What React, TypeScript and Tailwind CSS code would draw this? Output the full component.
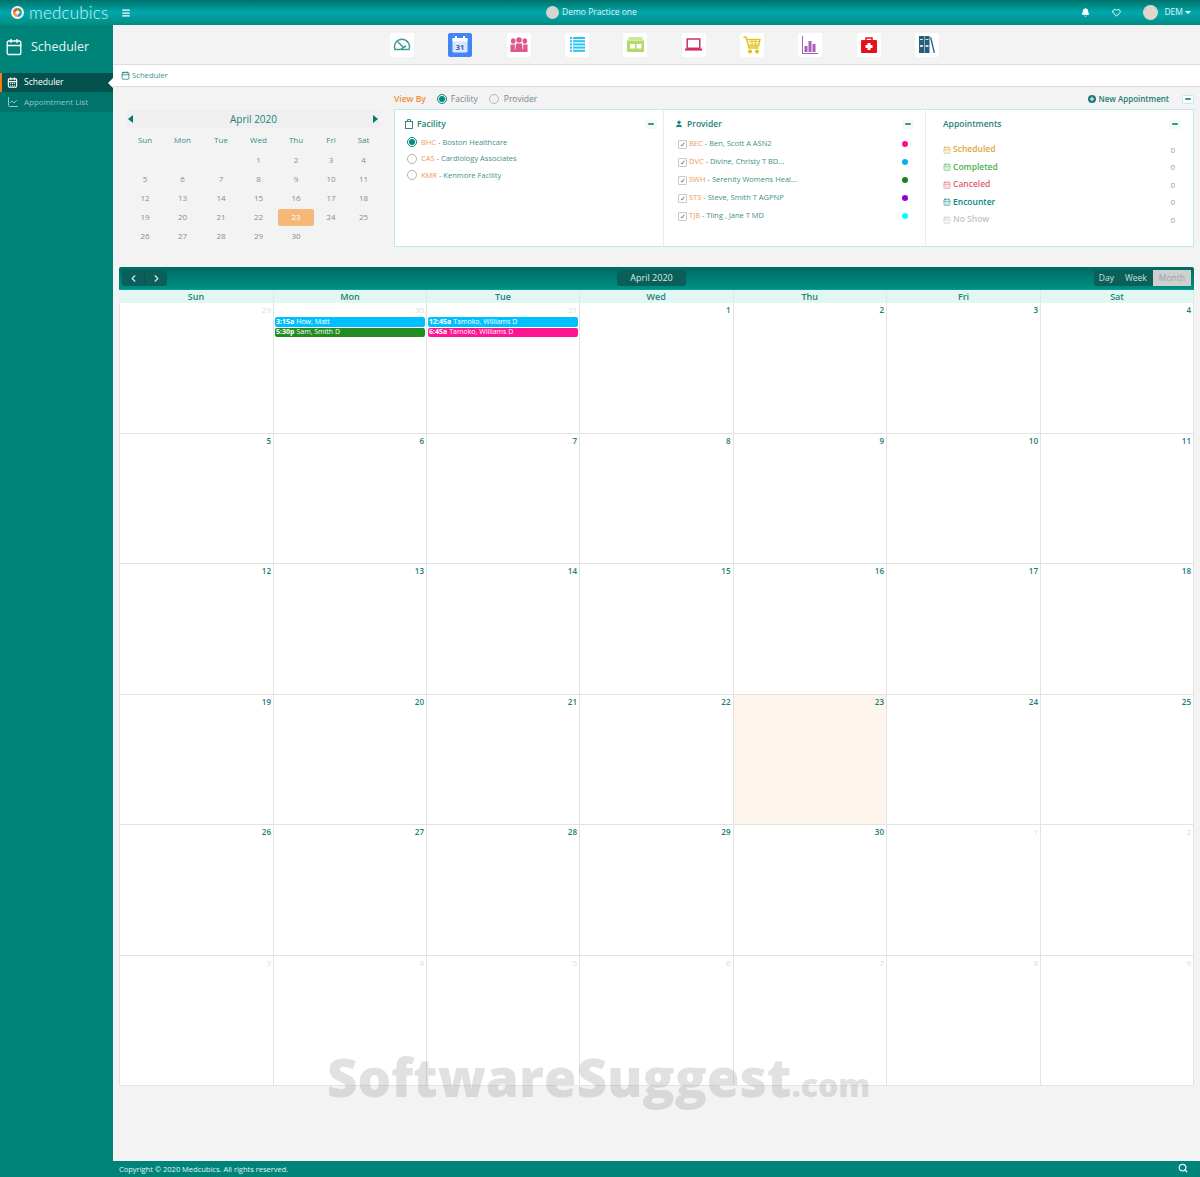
import { Bell, Calendar, CalendarDays, ChevronLeft, ChevronRight, Heart, LineChart, Menu, Minus, Plus, Search, User } from 'lucide-react';

const weekDays = ['Sun', 'Mon', 'Tue', 'Wed', 'Thu', 'Fri', 'Sat'];

const facilities = [
  { code: 'BHC', name: 'Boston Healthcare', active: true },
  { code: 'CAS', name: 'Cardiology Associates', active: false },
  { code: 'KMR', name: 'Kenmore Facility', active: false },
];

const providers = [
  { code: 'BEC', name: 'Ben, Scott A ASN2', dot: 'bg-[#ff0a8c]' },
  { code: 'DVC', name: 'Divine, Christy T BD...', dot: 'bg-[#00b4f0]' },
  { code: 'SWH', name: 'Serenity Womens Heal...', dot: 'bg-[#1b801b]' },
  { code: 'STS', name: 'Steve, Smith T AGPNP', dot: 'bg-[#9400d3]' },
  { code: 'TJB', name: 'Tling , Jane T MD', dot: 'bg-[#0ff]' },
];

const statuses = [
  { label: 'Scheduled', color: 'text-[#d9a93c]' },
  { label: 'Completed', color: 'text-[#4caf50]' },
  { label: 'Canceled', color: 'text-[#e0606e]' },
  { label: 'Encounter', color: 'text-[#00897f]' },
  { label: 'No Show', color: 'text-[#c4c4c4]' },
];

const miniWeeks = [
  ['', '', '', '1', '2', '3', '4'],
  ['5', '6', '7', '8', '9', '10', '11'],
  ['12', '13', '14', '15', '16', '17', '18'],
  ['19', '20', '21', '22', '23', '24', '25'],
  ['26', '27', '28', '29', '30', '', ''],
];

const monthWeeks = [
  ['29', '30', '31', '1', '2', '3', '4'],
  ['5', '6', '7', '8', '9', '10', '11'],
  ['12', '13', '14', '15', '16', '17', '18'],
  ['19', '20', '21', '22', '23', '24', '25'],
  ['26', '27', '28', '29', '30', '1', '2'],
  ['3', '4', '5', '6', '7', '8', '9'],
];

const events: Record<string, { time: string; name: string; color: string }[]> = {
  '0-1': [
    { time: '3:15a', name: 'How, Matt', color: 'bg-[#00bfff]' },
    { time: '5:30p', name: 'Sam, Smith D', color: 'bg-[#228b22]' },
  ],
  '0-2': [
    { time: '12:45a', name: 'Tamoko, Williams D', color: 'bg-[#00bfff]' },
    { time: '6:45a', name: 'Tamoko, Williams D', color: 'bg-[#ff1493]' },
  ],
};

function isMuted(week: number, day: string) {
  const n = Number(day);
  return (week === 0 && n > 20) || (week === 4 && n < 10) || week === 5;
}

function Tile({ children }: { children: React.ReactNode }) {
  return <div className="flex h-[24px] w-[24px] items-center justify-center rounded-[2px] bg-white">{children}</div>;
}

function ToolbarIcons() {
  return (
    <div className="flex h-[40px] items-center justify-center gap-[34.300px] border-b border-[#dedede] pl-[16px]">
      <Tile>
        <svg width="18" height="15" viewBox="0 0 18 15" fill="none" stroke="#3d9c98" strokeWidth="1.5">
          <path d="M2 12.5 A7.5 7.5 0 1 1 16 12.5 Z" />
          <path d="M5 5l6 6M8 12l5-3" />
        </svg>
      </Tile>
      <div className="flex h-[24px] w-[24px] flex-col items-center justify-center rounded-[2px] bg-[#4285f4]">
        <svg width="16" height="17" viewBox="0 0 16 17">
          <rect x="0.5" y="2" width="15" height="14.5" rx="1" fill="#dbe7fb" />
          <rect x="0.5" y="2" width="15" height="3.5" fill="#fff" />
          <rect x="3" y="0" width="2" height="3.5" fill="#fff" />
          <rect x="11" y="0" width="2" height="3.5" fill="#fff" />
          <text x="8" y="14" textAnchor="middle" fontSize="7.5" fontWeight="700" fill="#2a5db8" fontFamily="Open Sans, sans-serif">31</text>
        </svg>
      </div>
      <Tile>
        <svg width="18" height="15" viewBox="0 0 18 15" fill="#e0578c">
          <circle cx="9" cy="3" r="2.8" />
          <ellipse cx="3.2" cy="4" rx="2.3" ry="2.800" />
          <ellipse cx="14.800" cy="4" rx="2.3" ry="2.800" />
          <path d="M6 6.500h6l.6 6.500H5.400z" />
          <path d="M.5 7.500h4.300v5.500H.5zM13.200 7.500h4.300v5.500h-4.300z" />
          <path d="M.5 12.500h17V15H.5z" />
        </svg>
      </Tile>
      <Tile>
        <svg width="15" height="15" viewBox="0 0 15 15" fill="#2bc4f2">
          {[0, 3.2, 6.4, 9.6, 12.8].map((y) => (
            <g key={y}>
              <rect x="0" y={y} width="2" height="2" />
              <rect x="3" y={y} width="12" height="2" />
            </g>
          ))}
        </svg>
      </Tile>
      <Tile>
        <svg width="17" height="15" viewBox="0 0 17 15">
          <path d="M0 3.5h17V15H0z" fill="#b5d96a" />
          <path d="M2 0h13l1 3.5H1z" fill="#cde596" />
          <rect x="3" y="7" width="5" height="4.5" fill="#fff" />
          <rect x="9.5" y="7" width="5" height="4.5" fill="#fff" />
        </svg>
      </Tile>
      <Tile>
        <svg width="17" height="13" viewBox="0 0 17 13" fill="none" stroke="#d1305f" strokeWidth="1.5">
          <rect x="2.2" y="1" width="12.6" height="9.3" />
          <path d="M0 11.6h17" strokeWidth="2" />
        </svg>
      </Tile>
      <Tile>
        <svg width="18" height="18" viewBox="0 0 18 18" fill="none" stroke="#e3c21e" strokeWidth="1.4">
          <path d="M0.5 1H3l3 11h9.5" />
          <path d="M4 3.5h13l-1.5 6.5H6" />
          <path d="M6 5.5h10M6.5 8h9M9 3.5V10M12.5 3.5V10" strokeWidth="0.9" />
          <circle cx="7" cy="15.5" r="1.4" fill="#e3c21e" />
          <circle cx="14" cy="15.5" r="1.4" fill="#e3c21e" />
        </svg>
      </Tile>
      <Tile>
        <svg width="16" height="18" viewBox="0 0 16 18" fill="#a55fb8">
          <rect x="0" y="0" width="1" height="18" />
          <rect x="0" y="17" width="16" height="1" />
          <rect x="2.5" y="10" width="3" height="6" />
          <rect x="6.5" y="5" width="3" height="11" />
          <rect x="10.5" y="8" width="3" height="8" />
        </svg>
      </Tile>
      <Tile>
        <svg width="16" height="16" viewBox="0 0 16 16">
          <path d="M5 3V1h6v2" fill="none" stroke="#e8101a" strokeWidth="1.5" />
          <rect x="0" y="3" width="16" height="13" rx="1" fill="#e8101a" />
          <path d="M6.5 6h3v2h2v3h-2v2h-3v-2h-2V8h2z" fill="#fff" />
        </svg>
      </Tile>
      <Tile>
        <svg width="16" height="17" viewBox="0 0 16 17" fill="#25607a">
          <path d="M0 0h5v17H0zM5.500 0h5v17h-5z" />
          <path d="M1 3h3v1H1zM1 9h3v2H1zM6.500 3h3v1h-3zM6.500 9h3v2h-3z" fill="#cfe3ea" />
          <path d="M11 1.500l1.200-.4L16 16.500l-1.300.5z" />
        </svg>
      </Tile>
    </div>
  );
}

function CollapseButton() {
  return (
    <span className="flex h-[9px] w-[12px] items-center justify-center rounded-[2px] bg-[#f3f9f8]">
      <Minus size={8} strokeWidth={4} className="text-[#00746c]" />
    </span>
  );
}

function MiniCalendar() {
  return (
    <div className="w-[253px] text-center">
      <div className="flex h-[18px] items-center justify-between bg-[#efefef] px-[1px]">
        <span className="h-0 w-0 border-y-[4px] border-r-[5px] border-y-transparent border-r-[#00796f]" />
        <span className="pl-[1px] text-[10px] leading-none text-[#23807a]">April 2020</span>
        <span className="mr-[1px] h-0 w-0 border-y-[4px] border-l-[5px] border-y-transparent border-l-[#00796f]" />
      </div>
      <div className="mt-[5px] grid h-[13px] grid-cols-[36px_39px_38px_37px_38px_32px_33px] items-center text-[8px] text-[#3b8d88]">
        {weekDays.map((d) => (
          <span key={d}>{d}</span>
        ))}
      </div>
      <div className="mt-[4px]">
        {miniWeeks.map((week, w) => (
          <div key={w} className="grid h-[19.200px] grid-cols-[36px_39px_38px_37px_38px_32px_33px] items-center text-[8px] text-[#8b8b8b]">
            {week.map((d, i) =>
              d === '23' ? (
                <span key={i} className="mx-[1px] flex h-[17px] items-center justify-center rounded-[2px] bg-[#f7b777] text-white">
                  {d}
                </span>
              ) : (
                <span key={i}>{d}</span>
              )
            )}
          </div>
        ))}
      </div>
    </div>
  );
}

function FilterPanel() {
  return (
    <div className="flex flex-1 flex-col">
      <div className="flex h-[22px] items-center pt-[2px] text-[8.500px]">
        <span className="font-semibold text-[#ee8f3a]">View By</span>
        <span className="ml-[11px] flex h-[10px] w-[10px] items-center justify-center rounded-full border border-[#00897f]">
          <span className="h-[6px] w-[6px] rounded-full bg-[#00897f]" />
        </span>
        <span className="ml-[4px] text-[#74888a]">Facility</span>
        <span className="ml-[11px] h-[10px] w-[10px] rounded-full border border-[#b5b5b5]" />
        <span className="ml-[5px] text-[#74888a]">Provider</span>
        <span className="ml-auto flex items-center gap-[2px] text-[8px] font-semibold text-[#1a7d77]">
          <span className="flex h-[8px] w-[8px] items-center justify-center rounded-full bg-[#1a7d77]">
            <Plus size={6} strokeWidth={4} className="text-white" />
          </span>
          New Appointment
        </span>
        <span className="ml-[13px] flex h-[9px] w-[12px] items-center justify-center rounded-[1px] border border-[#c5ecec] bg-white">
          <Minus size={8} strokeWidth={4} className="text-[#00746c]" />
        </span>
      </div>
      <div className="flex h-[138px] border border-[#b9ecec] bg-white text-[7.500px]">
        <section className="w-[269px] border-r border-[#ececec] pt-[9px] pr-[6px] pl-[10px]">
          <div className="flex h-[10px] items-center">
            <svg width="8" height="10" viewBox="0 0 8 10" fill="none" stroke="#1a7d77" strokeWidth="0.9">
              <rect x="0.5" y="2.500" width="7" height="7" />
              <path d="M2.500 2.500V.6h3v1.900" />
            </svg>
            <span className="ml-[4px] text-[8.500px] font-semibold text-[#23807a]">Facility</span>
            <span className="ml-auto">
              <CollapseButton />
            </span>
          </div>
          <div className="mt-[5px] pl-[2px]">
            {facilities.map((f) => (
              <div key={f.code} className="flex h-[16.500px] items-center">
                {f.active ? (
                  <span className="flex h-[10px] w-[10px] items-center justify-center rounded-full border border-[#00897f]">
                    <span className="h-[6px] w-[6px] rounded-full bg-[#00897f]" />
                  </span>
                ) : (
                  <span className="h-[10px] w-[10px] rounded-full border border-[#b5b5b5]" />
                )}
                <span className="ml-[4px] text-[#f0995a]">{f.code}</span>
                <span className="ml-[2px] text-[#3f8f8c]">- {f.name}</span>
              </div>
            ))}
          </div>
        </section>
        <section className="w-[262px] border-r border-[#ececec] pt-[9px] pr-[11px] pl-[11px]">
          <div className="flex h-[10px] items-center">
            <User size={8} fill="#1a7d77" className="text-[#1a7d77]" />
            <span className="ml-[4px] text-[8.500px] font-semibold text-[#23807a]">Provider</span>
            <span className="ml-auto">
              <CollapseButton />
            </span>
          </div>
          <div className="mt-[6px] pl-[3px]">
            {providers.map((p) => (
              <div key={p.code} className="flex h-[18px] items-center">
                <span className="flex h-[9px] w-[9px] items-center justify-center rounded-[1px] border border-[#c9c9c9] text-[7px] leading-none text-[#36706c]">✓</span>
                <span className="ml-[2px] text-[#f0995a]">{p.code}</span>
                <span className="ml-[2px] text-[#3f8f8c]">- {p.name}</span>
                <span className={`mr-[6px] ml-auto h-[6px] w-[6px] rounded-full ${p.dot}`} />
              </div>
            ))}
          </div>
        </section>
        <section className="flex-1 pt-[9px] pr-[12px] pl-[17px]">
          <div className="flex h-[10px] items-center">
            <span className="text-[8.500px] font-semibold text-[#23807a]">Appointments</span>
            <span className="ml-auto">
              <CollapseButton />
            </span>
          </div>
          <div className="mt-[12px]">
            {statuses.map((s) => (
              <div key={s.label} className={`flex h-[17.500px] items-center text-[8.500px] font-semibold ${s.color}`}>
                <CalendarDays size={8} strokeWidth={1.6} />
                <span className="ml-[2px]">{s.label}</span>
                <span className="mr-[6px] ml-auto text-[8px] font-normal text-[#9a9a9a]">0</span>
              </div>
            ))}
          </div>
        </section>
      </div>
    </div>
  );
}

function MonthCalendar() {
  return (
    <div className="mt-[20px]">
      <div className="relative flex h-[23px] items-center rounded-t-[2px] border-b border-[#00a093] bg-gradient-to-b from-[#006a62] to-[#008f82] px-[3px]">
        <div className="flex h-[16px] items-center rounded-[2px] bg-[#0a5f5a] text-[#d8ece9]">
          <span className="flex w-[23px] justify-center border-r border-[#07524d]">
            <ChevronLeft size={11} strokeWidth={2.5} />
          </span>
          <span className="flex w-[22px] justify-center">
            <ChevronRight size={11} strokeWidth={2.5} />
          </span>
        </div>
        <span className="absolute left-[498px] flex h-[16px] w-[69px] items-center justify-center rounded-[2px] bg-[#0a5f5a] text-[9px] text-[#d8ece9]">
          April 2020
        </span>
        <div className="ml-auto flex h-[16px] items-center rounded-[2px] bg-[#0a5f5a] text-[8.500px] text-[#c5e1de]">
          <span className="px-[5px]">Day</span>
          <span className="px-[6px]">Week</span>
          <span className="flex h-[16px] items-center bg-[#cfcfcf] px-[6px] text-[#8fa8a6]">Month</span>
        </div>
      </div>
      <div className="grid h-[13px] grid-cols-[155px_153px_153px_153.500px_153.500px_154px_153px] bg-[#e2f7f1] text-center text-[9px] leading-[13px] font-semibold text-[#23807a]">
        {weekDays.map((d) => (
          <span key={d} className="border-r border-[#d4eee8]">
            {d}
          </span>
        ))}
      </div>
      <div className="border-l border-[#e3e3e3] bg-white">
        {monthWeeks.map((week, w) => (
          <div key={w} className="grid h-[130.500px] grid-cols-[154px_153px_153px_153.500px_153.500px_154px_153px] border-b border-[#e3e3e3]">
            {week.map((d, i) => (
              <div
                key={i}
                className={`border-r border-[#e3e3e3] text-right ${w === 3 && i === 4 ? 'bg-[#fdf5ec]' : ''}`}
              >
                <div className={`pt-[2px] pr-[2px] text-[8px] leading-[10px] ${isMuted(w, d) ? 'text-[#d3dedd]' : 'font-semibold text-[#1a7d77]'}`}>
                  {d}
                </div>
                <div className="mt-[2px] flex flex-col gap-[1px] px-[1px]">
                  {(events[`${w}-${i}`] || []).map((e) => (
                    <div key={e.time} className={`flex h-[9.500px] items-center rounded-[2px] pl-[1px] text-left text-[7px] text-white ${e.color}`}>
                      <b className="font-bold">{e.time}</b>
                      <span className="ml-[2px]">{e.name}</span>
                    </div>
                  ))}
                </div>
              </div>
            ))}
          </div>
        ))}
      </div>
    </div>
  );
}

export default function App() {
  return (
    <div className="relative flex h-[1177px] w-[1200px] flex-col overflow-hidden bg-[#f3f3f3] font-['Open_Sans',sans-serif]">
      <header className="relative flex h-[25px] items-center bg-gradient-to-b from-[#00736b] via-[#00a8ad] to-[#008c82] pr-[9px] pl-[11px] text-white">
        <span className="flex h-[13px] w-[13px] items-center justify-center rounded-full bg-[#f4f4f4]">
          <svg width="9" height="9" viewBox="0 0 9 9" fill="none" strokeWidth="2.4">
            <path d="M4.500 1.200a3.300 3.300 0 0 1 3.300 3.300" stroke="#3fa64a" />
            <path d="M7.800 4.500a3.300 3.300 0 0 1-3.300 3.300" stroke="#2f8fce" />
            <path d="M4.500 7.800a3.300 3.300 0 0 1-3.300-3.300" stroke="#f0a030" />
            <path d="M1.200 4.500a3.300 3.300 0 0 1 3.300-3.300" stroke="#e5493a" />
          </svg>
        </span>
        <span className="ml-[5px] font-['Lato',sans-serif] text-[17px] leading-none font-light tracking-[0.2px] text-[#d5eeee]">medcubics</span>
        <Menu size={10} strokeWidth={3} className="ml-[13px]" />
        <div className="absolute left-[546px] flex items-center">
          <span className="h-[13px] w-[13px] rounded-full bg-[#d8d4cf]" />
          <span className="ml-[3px] text-[8.500px] text-[#e3f4f4]">Demo Practice one</span>
        </div>
        <Bell size={9} fill="#fff" className="ml-auto" />
        <Heart size={9} strokeWidth={2.5} className="ml-[22px]" />
        <span className="ml-[22px] h-[15px] w-[15px] rounded-full bg-[#dcd6cf]" />
        <span className="ml-[6px] text-[8.500px] text-[#e3f4f4]">DEM</span>
        <span className="ml-[2px] h-0 w-0 border-x-[3px] border-t-[3px] border-x-transparent border-t-white" />
      </header>
      <div className="flex flex-1">
        <aside className="w-[113px] bg-[#00847a] text-white">
          <div className="flex h-[48px] items-center pb-[4px] pl-[5px]">
            <Calendar size={18} strokeWidth={1.8} />
            <span className="ml-[8px] text-[12.500px] text-[#e8f6f4]">Scheduler</span>
          </div>
          <div className="relative flex h-[19px] items-center border-l-[2px] border-[#f07f13] bg-[#05514d] pl-[5px] text-[8.500px]">
            <CalendarDays size={11} strokeWidth={2.5} />
            <span className="ml-[6px]">Scheduler</span>
            <span className="absolute right-0 h-0 w-0 border-y-[5px] border-r-[5px] border-y-transparent border-r-white" />
          </div>
          <div className="flex h-[20px] items-center bg-[#00736b] pl-[7px] text-[8px] text-[#92c9c4]">
            <LineChart size={12} />
            <span className="ml-[5px]">Appointment List</span>
          </div>
        </aside>
        <main className="flex flex-1 flex-col">
          <ToolbarIcons />
          <div className="flex h-[22px] items-center border-b border-[#dedede] bg-white pl-[8px] text-[7.700px] text-[#3f8f8c]">
            <Calendar size={9} className="text-[#1a7d77]" />
            <span className="ml-[2px]">Scheduler</span>
          </div>
          <div className="flex-1 pr-[6px] pl-[6px]">
            <div className="flex gap-[14px] pl-[8px]">
              <div className="pt-[23px]">
                <MiniCalendar />
              </div>
              <FilterPanel />
            </div>
            <MonthCalendar />
          </div>
          <footer className="flex h-[16px] items-center justify-between bg-[#00847a] pt-[2px] pr-[12px] pl-[6px] text-[7.500px] text-[#e3f4f4]">
            <span>Copyright © 2020 Medcubics. All rights reserved.</span>
            <Search size={10} strokeWidth={3} className="mb-[4px]" />
          </footer>
        </main>
      </div>
      <div className="pointer-events-none absolute top-[1044px] left-[327px] text-[53px] leading-[66px] font-extrabold whitespace-nowrap text-[#9a9a9a]/30">
        SoftwareSuggest<span className="text-[32px]">.com</span>
      </div>
    </div>
  );
}
